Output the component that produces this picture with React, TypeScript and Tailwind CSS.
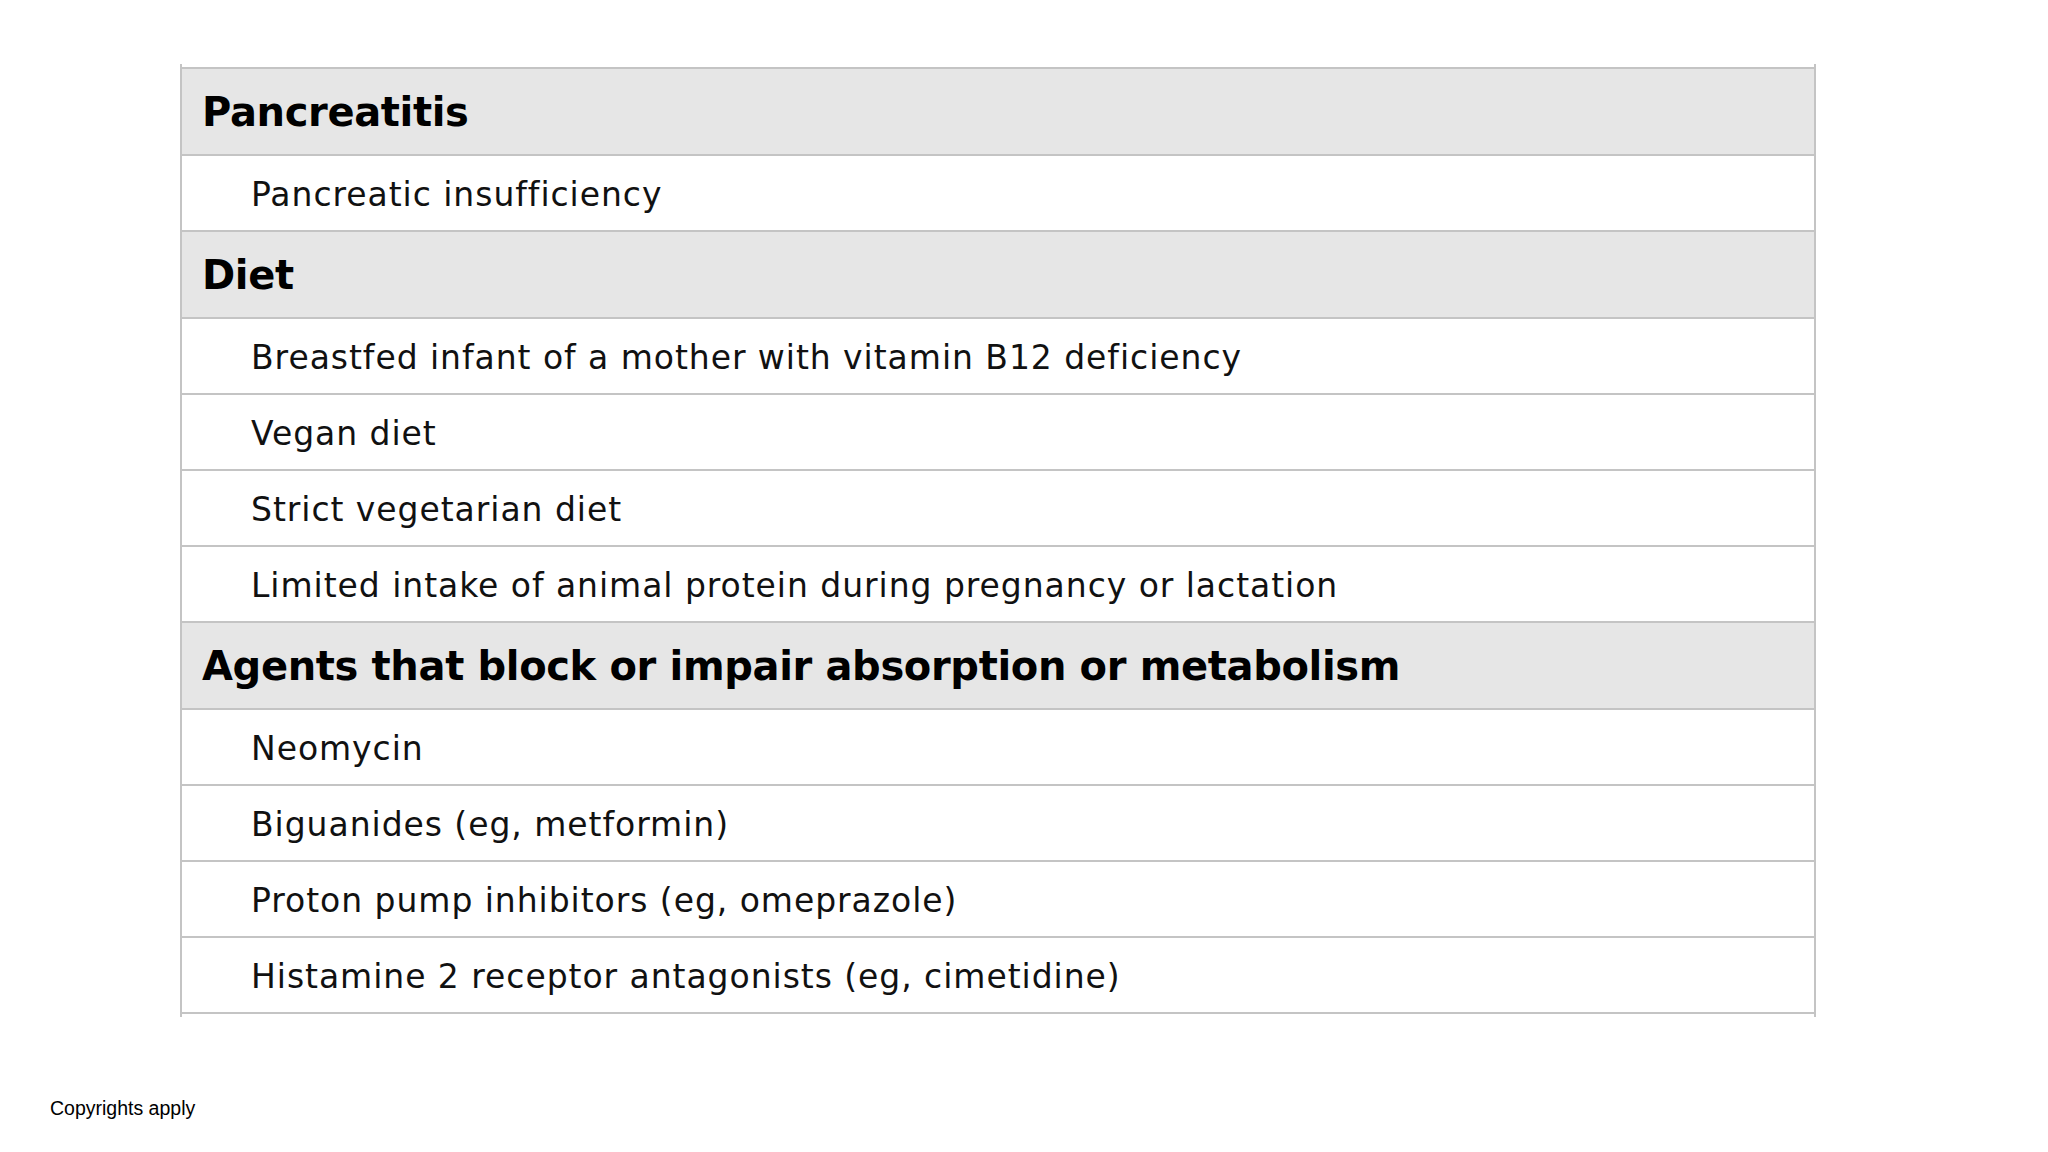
const sections = [
  { title: "Pancreatitis", items: ["Pancreatic insufficiency"] },
  {
    title: "Diet",
    items: [
      "Breastfed infant of a mother with vitamin B12 deficiency",
      "Vegan diet",
      "Strict vegetarian diet",
      "Limited intake of animal protein during pregnancy or lactation",
    ],
  },
  {
    title: "Agents that block or impair absorption or metabolism",
    items: [
      "Neomycin",
      "Biguanides (eg, metformin)",
      "Proton pump inhibitors (eg, omeprazole)",
      "Histamine 2 receptor antagonists (eg, cimetidine)",
    ],
  },
];

export default function App() {
  return (
    <div className="w-full h-[1152px] bg-white overflow-hidden flex flex-col">
      <div className="ml-[180px] mt-[64px] w-[1636px] border-x-2 border-[#c4c4c4] py-[3px]">
        <div
          className="border-t-2 border-[#c4c4c4] text-[#111]"
          style={{ fontFamily: '"DejaVu Sans", Verdana, sans-serif' }}
        >
          {sections.map((section) => (
            <div key={section.title}>
              <div className="h-[87px] flex items-center bg-[#e6e6e6] border-b-2 border-[#c4c4c4] pl-[20px] text-[40px] font-bold text-black leading-none tracking-[-0.35px]">
                {section.title}
              </div>
              {section.items.map((item) => (
                <div
                  key={item}
                  className="h-[76px] flex items-center border-b-2 border-[#c4c4c4] pl-[69px] pt-[2px] text-[33px] leading-none tracking-[0.95px]"
                >
                  {item}
                </div>
              ))}
            </div>
          ))}
        </div>
      </div>
      <p
        className="ml-[50px] mt-[79px] text-[19.5px] leading-[24px] text-black"
        style={{ fontFamily: '"Liberation Sans", Arial, sans-serif' }}
      >
        Copyrights apply
      </p>
    </div>
  );
}
